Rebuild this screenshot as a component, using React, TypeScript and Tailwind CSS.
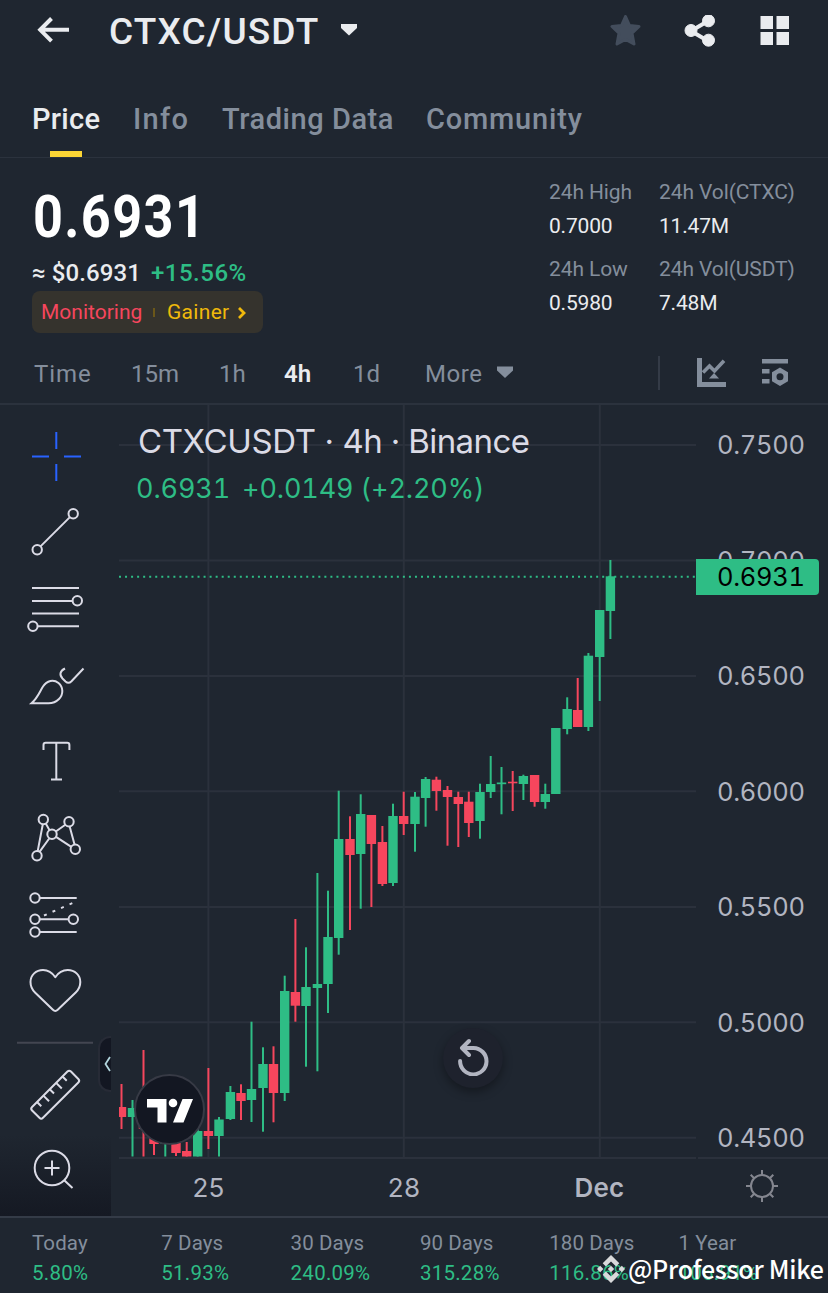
import React from "react";

const UP = "#2ebd85";
const DOWN = "#f6465d";

// centre x, wick top, body top, body bottom, wick bottom, rising
type Candle = [number, number, number, number, number, boolean];

const candles: Candle[] = [
  [121.5, 1084, 1107, 1117, 1129, false],
  [132.5, 1100, 1108, 1117, 1156.5, true],
  [143.5, 1050, 1120, 1129, 1156.5, false],
  [154, 1125, 1130, 1144, 1155, false],
  [165.3, 1130, 1135, 1144, 1156.5, true],
  [176, 1130, 1140, 1153, 1156, false],
  [186.7, 1142, 1151, 1156.5, 1156.5, false],
  [197.7, 1126, 1131, 1156.5, 1156.5, true],
  [208.4, 1068, 1131, 1136, 1149, false],
  [219, 1117, 1119.5, 1136, 1156.5, true],
  [230.4, 1086, 1092, 1119, 1120, true],
  [241, 1084.3, 1093, 1101, 1120, false],
  [251.5, 1021.7, 1089, 1100, 1122, true],
  [263, 1047.3, 1064, 1088, 1131.7, true],
  [273.5, 1046.3, 1064, 1093, 1122.3, false],
  [284.7, 975.7, 991, 1093, 1101, true],
  [295.4, 919, 992, 1005.7, 1021.7, false],
  [306, 947.3, 987, 1006, 1066.7, true],
  [317.4, 873, 984, 988, 1071.3, true],
  [328, 890.7, 937, 984, 1013, true],
  [338.7, 790.7, 839, 938, 954.7, true],
  [350, 816.3, 839, 855, 930, false],
  [360.7, 794.3, 814, 854, 908.7, true],
  [371.4, 815, 815, 844, 907, false],
  [382.4, 826, 842, 884, 886, false],
  [393, 803.7, 816, 883, 886, true],
  [403.7, 791.7, 816, 824, 835, false],
  [415, 792, 796.7, 824, 851.7, true],
  [425.6, 777, 779, 798, 826.7, true],
  [436.4, 776.7, 779.7, 791, 810.7, false],
  [447.5, 786, 790, 797, 845.7, false],
  [458.3, 791.7, 797, 804, 847, false],
  [468.8, 791.7, 801.7, 823, 837, false],
  [480, 783.7, 792, 821, 838.7, true],
  [490.7, 756, 784, 792, 798, true],
  [501.5, 767, 782.5, 784.2, 814.3, true],
  [512.7, 771, 781.7, 783.3, 811, false],
  [523.4, 774.7, 776, 784, 800, true],
  [534.6, 775, 775, 802, 806.7, false],
  [545.3, 783.7, 794, 802, 808.7, true],
  [555.8, 728, 728, 794, 794, true],
  [567.2, 697.3, 709, 729, 734.3, true],
  [577.7, 678, 710, 727, 727, false],
  [588.4, 653, 655.7, 727, 731, true],
  [599.7, 610, 610, 657, 701, true],
  [610.4, 560, 576.3, 611, 639, true],
];

const gridY = [445, 560.5, 676, 791.3, 907, 1022.3, 1137.7];
const gridX = [208.4, 403.8, 599.8];

function Plot() {
  return (
    <svg className="block h-[752px] w-[585px]" viewBox="111 405 585 752">
      <defs>
        <clipPath id="plot">
          <rect x="119" y="404" width="577" height="753" />
        </clipPath>
      </defs>
      <g stroke="#2b313c" strokeWidth="2">
        {gridY.map((y) => (
          <path key={y} d={`M119 ${y}H696`} />
        ))}
        {gridX.map((x) => (
          <path key={x} d={`M${x} 404V1157`} />
        ))}
      </g>
      <path d="M119 576.7H696" stroke={UP} strokeWidth="2" strokeDasharray="2 4.04" />
      <g clipPath="url(#plot)">
        {candles.map(([x, hi, top, bottom, lo, up]) => (
          <g key={x} fill={up ? UP : DOWN}>
            <rect x={x - 1} y={hi} width="2" height={lo - hi} />
            <rect x={x - 4.7} y={top} width="9.4" height={bottom - top} />
          </g>
        ))}
      </g>
    </svg>
  );
}

function ToolIcons() {
  return (
    <svg className="block h-[811px] w-[111px]" viewBox="0 405 111 811" fill="none" stroke="#dbdbe6" strokeWidth="2">
      <path d="M56.3 432v17M56.3 464v17M32 456.5h17M64 456.5h17" stroke="#2962ff" />
      <g>
        <circle cx="73.2" cy="513.8" r="4.7" />
        <circle cx="37.2" cy="549.7" r="4.7" />
        <path d="M69.9 517.1 40.5 546.4" />
      </g>
      <g>
        <path d="M32 588h47M32 601h40.5M32 613.5h47M37.5 626.3H79" />
        <circle cx="77.3" cy="600.7" r="4.7" />
        <circle cx="32.9" cy="626.3" r="4.7" />
      </g>
      <path d="M31.500 703.300C38 697.500 40 691 43 686.500c4-6 10.500-7.500 15.500-3.500 5 4.200 5 11.500.5 16-3 3-6 4.300-10.500 4.300z" />
      <path d="M65 668.500c-5 2.500-6 6-2.500 10l3 3c2 1.700 4 1.700 6-.3L83.500 668.500" />
      <path d="M43.500 750v-5c0-1.500.8-2.200 2.200-2.200h21.500c1.500 0 2.200.7 2.200 2.200v5M56.300 743v36.300M51 779.500h11" />
      <g>
        <path d="m42.800 824.200-5.100 26.900M45.600 823.300l4.100 7.200M39.700 851.700 49.200 838.500M55.800 831.500l9.500-6.800M69.600 826.200 74.600 844.800M56 836.800l15.300 10" />
        <circle cx="43.300" cy="819.500" r="4.700" />
        <circle cx="69" cy="821.700" r="4.700" />
        <circle cx="52" cy="834.300" r="4.700" />
        <circle cx="75.300" cy="849.300" r="4.700" />
        <circle cx="37" cy="855.700" r="4.700" />
      </g>
      <g>
        <circle cx="35" cy="898" r="4.700" />
        <circle cx="35" cy="919.300" r="4.700" />
        <circle cx="73.300" cy="919.300" r="4.700" />
        <circle cx="35" cy="932" r="4.700" />
        <path d="M39.700 898h37M39.700 919.300h29M39.700 932h37" />
        <path d="M44 915.500 76 901.500" strokeDasharray="3 6.300" />
      </g>
      <path
        d="M55.300 1011c-1 0-1.700-.5-2.400-1.200L35 992.500c-3-3-4.500-6.500-4.500-10.500 0-7 5.500-12 12.500-12 5 0 9 2.300 12.300 7.200 3.300-4.900 7.400-7.200 12.400-7.200 7 0 12.600 5 12.600 12 0 4-1.500 7.500-4.600 10.500l-18 17.300c-.7.7-1.400 1.200-2.400 1.200z"
        strokeLinejoin="round"
      />
      <path d="M17 1042.700h76" stroke="#434651" />
      <g transform="translate(55.200 1094.700) rotate(-45)">
        <rect x="-27.500" y="-7.700" width="55" height="15.400" rx="2.500" />
        <path d="M-18 -7.700v6M-9 -7.700v8M0 -7.700v6M9 -7.700v8M18 -7.700v6" />
      </g>
      <g>
        <circle cx="52" cy="1168" r="17.300" />
        <path d="M44.500 1168h15M52 1160.500v15M64.500 1180.500l8 7.500" />
      </g>
    </svg>
  );
}

const prices = ["0.7500", "0.7000", "0.6500", "0.6000", "0.5500", "0.5000", "0.4500"];

const returns = [
  ["Today", "5.80%"],
  ["7 Days", "51.93%"],
  ["30 Days", "240.09%"],
  ["90 Days", "315.28%"],
  ["180 Days", "116.86%"],
  ["1 Year", "106.91%"],
];

function Stat({ label, value }: { label: string; value: string }) {
  return (
    <div>
      <div className="h-[34px] text-[21px] leading-[34px] tracking-[-0.100px] text-[#848e9c]">{label}</div>
      <div className="h-[34px] text-[21px] leading-[34px] tracking-[-0.200px] text-[#eaecef]">{value}</div>
    </div>
  );
}

export default function App() {
  return (
    <div className="relative flex h-[1293px] w-[828px] flex-col overflow-hidden bg-[#1f2630] font-['Roboto',sans-serif] whitespace-nowrap">
      <header className="flex h-[62px] shrink-0 items-center pr-[38px] pl-[37px]">
        <svg className="h-8 w-8" viewBox="0 0 32 32" fill="none" stroke="#eaecef" strokeWidth="4">
          <path d="M3 14.800h29M14.500 3.500 3.200 14.800l11.300 11.300" />
        </svg>
        <h1 className="ml-[40px] w-[231px] pt-[2px] text-[37px] leading-[60px] font-medium tracking-[1.150px] text-[#eaecef]">CTXC/USDT</h1>
        <svg className="h-[14px] w-[18px]" viewBox="0 0 18 14" fill="#eaecef">
          <path d="M1 0h16v4L9 11.500 1 4z" />
        </svg>
        <svg className="ml-auto h-8 w-8" viewBox="0 0 32 32" fill="#434d5c" stroke="#434d5c" strokeWidth="3" strokeLinejoin="round">
          <path d="m16.500 1.500 4 9 9.500 1-7 6.700 2 10.800-8.500-4.600L8 29l2-10.800-7-6.700 9.500-1z" />
        </svg>
        <svg className="ml-[43px] h-8 w-8" viewBox="0 0 32 32" fill="#eaecef" stroke="#eaecef">
          <path d="M24 6 7 16l17 10" fill="none" strokeWidth="4" />
          <circle cx="24.500" cy="5.800" r="6" />
          <circle cx="7" cy="15.500" r="6" />
          <circle cx="24.500" cy="25.200" r="6" />
        </svg>
        <svg className="ml-[44px] h-[30px] w-[30px]" viewBox="0 0 30 30" fill="#eaecef">
          <path d="M.500 0H13v13H.500zM16.500 0H29v13H16.500zM.500 16H13v13H.500zM16.500 16H29v13H16.500z" />
        </svg>
      </header>

      <nav className="flex h-[96px] shrink-0 border-b border-[#2b323d] pt-[34px] pl-[32px] text-[29px] leading-[46px] font-medium text-[#848e9c]">
        <div className="flex w-[101px] flex-col tracking-[0.300px] text-[#eaecef]">
          Price
          <span className="mt-[9px] ml-[18px] block h-[6px] w-8 bg-[#fcd535]" />
        </div>
        <div className="w-[89px] tracking-[1.300px]">Info</div>
        <div className="w-[204px] tracking-[0.550px]">Trading Data</div>
        <div className="tracking-[0.800px]">Community</div>
      </nav>

      <section className="flex h-[182px] shrink-0">
        <div className="w-[549px] pt-[24px] pl-[33px]">
          <div className="origin-left scale-x-[0.87] text-[60px] leading-[70px] font-bold tracking-[1.600px] text-white">0.6931</div>
          <div className="-ml-px flex h-[42px] items-center text-[24px] font-medium text-[#eaecef]">
            <span className="w-[119px] tracking-[0.100px]">≈ $0.6931</span>
            <span className="tracking-[0.500px] text-[#2ebd85]">+15.56%</span>
          </div>
          <div className="-mt-[3px] -ml-px flex h-[42px] w-[231px] items-center rounded-lg bg-[#35332d] pt-px pl-[9px] text-[21px]">
            <span className="w-[112px] text-[#f6465d]">Monitoring</span>
            <span className="mr-[12px] h-[9px] w-[2px] bg-[#6b5719]" />
            <span className="w-[71px] tracking-[0.300px] text-[#f0b90b]">Gainer</span>
            <svg className="h-3 w-2" viewBox="0 0 8 12" fill="none" stroke="#f0b90b" strokeWidth="2.800">
              <path d="m1 1 5 5-5 5" />
            </svg>
          </div>
        </div>
        <div className="grid grid-cols-[110px_160px] grid-rows-[77px_68px] pt-[17px]">
          <Stat label="24h High" value="0.7000" />
          <Stat label="24h Vol(CTXC)" value="11.47M" />
          <Stat label="24h Low" value="0.5980" />
          <Stat label="24h Vol(USDT)" value="7.48M" />
        </div>
      </section>

      <section className="flex h-[65px] shrink-0 items-center border-b-2 border-[#2b323d] pt-[3px] pl-[34px] text-[24px] text-[#848e9c]">
        <span className="w-[97px] pt-px tracking-[0.900px]">Time</span>
        <span className="w-[88px] pt-px">15m</span>
        <span className="w-[65px] pt-px">1h</span>
        <span className="w-[69px] pt-px font-semibold text-[#eaecef]">4h</span>
        <span className="w-[72px] pt-px">1d</span>
        <span className="w-[71px] pt-px tracking-[0.600px]">More</span>
        <svg className="h-[14px] w-[18px]" viewBox="0 0 18 14" fill="#848e9c">
          <path d="M1 .500h16v4L9 12 1 4.500z" />
        </svg>
        <span className="ml-[144px] h-[34px] w-[2px] bg-[#343b47]" />
        <svg className="ml-[37px] h-[30px] w-[30px]" viewBox="0 0 30 30" fill="#848e9c">
          <path d="M0 0h5v24H29v5H0z" />
          <path d="M6 14.500 12.500 8l5 5L27 2.800" fill="none" stroke="#848e9c" strokeWidth="3.600" />
          <path d="m17 15 5 5.500H12z" />
        </svg>
        <svg className="ml-[35px] h-[30px] w-[30px]" viewBox="0 0 30 30" fill="#848e9c">
          <path d="M0 1h26v4.500H0zM0 11h7.500v4.500H0zM0 21h7.500v4.500H0z" />
          <path fillRule="evenodd" d="m18 9.500 8 4.700v9L18 28l-8-4.800v-9zm0 5.700a3.500 3.500 0 1 0 0 7 3.500 3.500 0 0 0 0-7z" />
        </svg>
      </section>

      <main className="flex h-[811px] shrink-0 font-['Inter',sans-serif]">
        <aside className="relative w-[111px] shrink-0 bg-[linear-gradient(to_bottom,transparent_0,transparent_730px,#151923_100%)]">
          <ToolIcons />
          <div className="absolute top-[631px] right-0 flex h-[56px] w-[13px] items-center justify-end rounded-l-xl border-2 border-r-0 border-[#272b36] bg-[#131722]">
            <svg className="h-4 w-[7px]" viewBox="0 0 7 16" fill="none" stroke="#b2d5dd" strokeWidth="1.800">
              <path d="M6 1 1.500 8 6 15" />
            </svg>
          </div>
        </aside>

        <div className="flex w-[717px] flex-col">
          <div className="flex h-[752px]">
            <div className="relative w-[585px]">
              <Plot />
              <div className="absolute top-[15px] left-[27px] text-[33px] leading-[42px] tracking-[-0.400px] text-[#dbdbe6]">
                CTXCUSDT · <span className="tracking-[-0.600px]">4h · Binance</span>
              </div>
              <div className="absolute top-[66px] left-[25px] flex text-[27px] leading-[36px] tracking-[-0.120px] text-[#2ebd85] tabular-nums">
                <span className="w-[106px]">0.6931</span>
                <span>+0.0149 (+2.20%)</span>
              </div>
              <div className="absolute top-[669px] left-[23px] flex h-[71px] w-[71px] items-center justify-center rounded-full border-2 border-[#373a45] bg-[#131722]">
                <svg className="mt-px h-[25px] w-[46px]" viewBox="0 0 46 25" fill="white">
                  <path d="M0 1h19.500v23.500h-9V9.500H0zM35.500 1H46L36.500 24.500H26z" />
                  <circle cx="26" cy="5" r="4.300" />
                </svg>
              </div>
              <div className="absolute top-[623px] left-[332px] flex h-[60px] w-[60px] items-center justify-center rounded-full bg-[#1e222d] shadow-[0_4px_10px_rgba(0,0,0,0.350)]">
                <svg className="mt-[-2px] h-[38px] w-[34px]" viewBox="0 0 34 38" fill="none" stroke="#b2b5c1" strokeWidth="4" strokeLinecap="round" strokeLinejoin="round">
                  <path d="M13 3 6 10l7 7M6.500 10H17.500a13.200 13.200 0 1 1-13.400 13" />
                </svg>
              </div>
            </div>
            <div className="relative w-[132px] pl-[21px] text-[25.500px] tracking-[-0.300px] text-[#b2b5c1] tabular-nums">
              <div className="-mt-[18px]">
                {prices.map((p) => (
                  <div key={p} className="h-[115.500px] leading-[115.500px]">
                    {p}
                  </div>
                ))}
              </div>
              <div className="absolute top-[154px] left-0 h-[36px] w-[123px] rounded-r bg-[#2ebd85] pl-[21px] leading-[36px] text-black">0.6931</div>
            </div>
          </div>
          <div className="flex h-[59px] text-[26px] leading-[58px] text-[#b2b5c1]">
            <div className="ml-2 grid w-[577px] grid-cols-[179px_212px_179px] border-t-2 border-[#2b313c] text-center tracking-[0.200px]">
              <span>25</span>
              <span>28</span>
              <span className="font-semibold">Dec</span>
            </div>
            <div className="ml-[2px] w-[130px] border-t-2 border-[#2b313c] pt-[11px] pl-[48px]">
              <svg className="h-8 w-8" viewBox="0 0 32 32" fill="none" stroke="#84868f" strokeWidth="2">
                <circle cx="16" cy="16" r="11" />
                <path d="M16 0v5M16 27v5M0 16h5M27 16h5M4.700 4.700l3.500 3.500M23.800 23.800l3.500 3.500M4.700 27.300l3.500-3.500M23.800 8.200l3.500-3.500" />
              </svg>
            </div>
          </div>
        </div>
      </main>

      <footer className="grid h-[77px] shrink-0 grid-cols-[repeat(6,129.300px)] border-t-2 border-[#343b47] pt-[10px] pl-[32px]">
        {returns.map(([label, value]) => (
          <div key={label} className="text-[20.500px] leading-[30px]">
            <div className="tracking-[0.100px] text-[#848e9c]">{label}</div>
            <div className="tracking-[0.250px] text-[#2ebd85]">{value}</div>
          </div>
        ))}
      </footer>

      <div className="absolute top-[1249px] left-[597px] flex h-10 items-center gap-[4px] text-white">
        <svg className="h-7 w-7" viewBox="0 0 28 28" fill="#d9dadb">
          <path d="m14 0 8.300 8.300-3.200 3.200L14 6.400 8.900 11.500 5.700 8.300zM3.200 10.800 6.400 14l-3.200 3.200L0 14zM14 10.800l3.200 3.200-3.200 3.200-3.200-3.200zM24.800 10.800 28 14l-3.200 3.200-3.200-3.200zM14 21.600l5.100-5.100 3.200 3.200L14 28l-8.300-8.300 3.200-3.200z" />
        </svg>
        <span className="-mt-px -ml-px font-['Noto_Sans_CJK_SC',sans-serif] text-[25px] font-medium tracking-[-0.250px]">@Professor Mike</span>
      </div>
    </div>
  );
}
